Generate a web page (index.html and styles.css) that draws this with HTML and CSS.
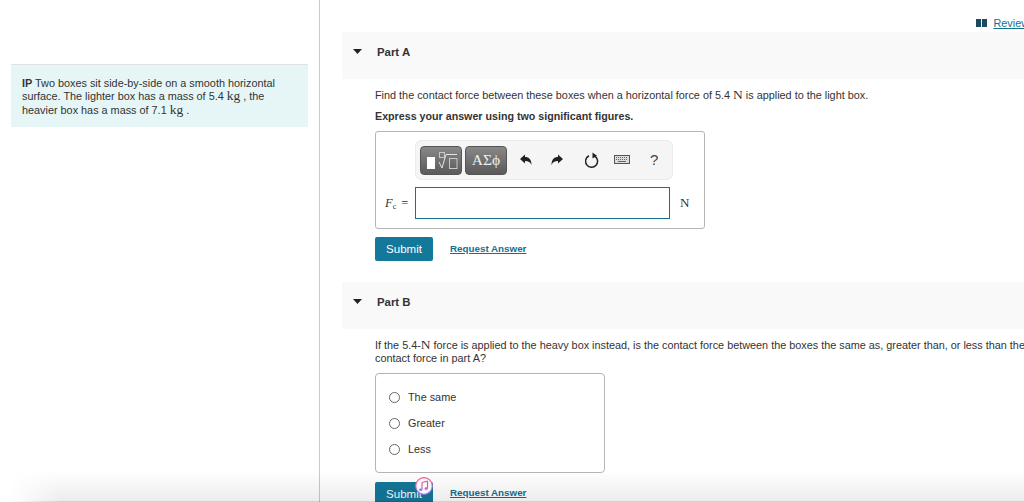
FILE: index.html
```html
<!DOCTYPE html>
<html lang="en">
<head>
<meta charset="utf-8">
<title>Contact force between boxes</title>
<link rel="stylesheet" href="styles.css">
</head>
<body>
<div class="page">
  <aside class="side">
    <div class="intro"><p><b>IP</b> Two boxes sit side-by-side on a smooth horizontal surface. The lighter box has a mass of 5.4 <span class="math">kg</span> , the heavier box has a mass of 7.1 <span class="math">kg</span> .</p></div>
  </aside>
  <main class="main">
    <div class="review"><svg class="book" viewBox="0 0 11 8" width="11" height="8"><path d="M0 0h5v8H0zM6 0h5v8H6z" fill="#1c4a5e"/></svg><a class="review-link">Review</a></div>

    <section class="part-head"><svg class="caret" viewBox="0 0 9 5" width="9" height="5"><path d="M0 0h9L4.500 5z" fill="#222"/></svg><h2>Part A</h2></section>
    <div class="part-a">
      <p class="q">Find the contact force between these boxes when a horizontal force of 5.4 <span class="math">N</span> is applied to the light box.</p>
      <p class="hint">Express your answer using two significant figures.</p>
      <div class="answer">
        <div class="toolbar">
          <span class="tbtn tbtn-tpl"><svg viewBox="0 0 40 27" width="40" height="27"><rect x="6" y="10" width="8" height="12" fill="#fff"/><rect x="18.500" y="5.500" width="5" height="5" fill="none" stroke="#c8c8c8"/><path d="M18 15l3 6 4-13.500h11" fill="none" stroke="#e4e4e4"/><rect x="28.500" y="11.500" width="7.500" height="10" fill="none" stroke="#c8c8c8"/></svg></span>
          <span class="tbtn tbtn-sym">ΑΣϕ</span>
          <span class="tools">
            <svg viewBox="0 0 12 12" width="12" height="12"><path d="M0 5l5-4.500V3c4 0 6.500 2.500 6.500 8C10.500 8.500 8.500 7 5 7v2.500z" fill="#222"/></svg>
            <svg viewBox="0 0 12 12" width="12" height="12"><path d="M12 5L7 .5V3C3 3 .5 5.500.5 11 1.500 8.500 3.500 7 7 7v2.500z" fill="#222"/></svg>
            <svg viewBox="0 0 15 16" width="15" height="16"><path d="M9.500 4A6 6 0 1 1 4 3.800" fill="none" stroke="#222" stroke-width="1.500"/><path d="M7.500 .5l4.500 3.300-4.500 2.700z" fill="#222"/></svg>
            <svg viewBox="0 0 16 9" width="16" height="9"><rect x=".5" y=".5" width="15" height="8" fill="#ddd" stroke="#555"/><path d="M2 2.500h12M2 4.500h12" stroke="#666" stroke-dasharray="1 1"/><path d="M4 6.500h8" stroke="#666"/></svg>
            <span class="help">?</span>
          </span>
        </div>
        <div class="answer-row">
          <span class="label"><i>F</i><sub>c</sub> =</span>
          <span class="field"></span>
          <span class="unit">N</span>
        </div>
      </div>
      <div class="actions"><span class="btn">Submit</span><a class="req">Request Answer</a></div>
    </div>

    <section class="part-head"><svg class="caret" viewBox="0 0 9 5" width="9" height="5"><path d="M0 0h9L4.500 5z" fill="#222"/></svg><h2>Part B</h2></section>
    <div class="part-b">
      <p class="q q-wide">If the 5.4-<span class="math">N</span> force is applied to the heavy box instead, is the contact force between the boxes the same as, greater than, or less than the contact force in part A?</p>
      <div class="choices">
        <label class="choice"><span class="radio"></span>The same</label>
        <label class="choice"><span class="radio"></span>Greater</label>
        <label class="choice"><span class="radio"></span>Less</label>
      </div>
      <div class="actions actions-b"><span class="btn">Submit</span><a class="req">Request Answer</a></div>
    </div>
  </main>
</div>
<div class="dock-shadow"></div>
<svg class="music" viewBox="0 0 18 18" width="18" height="18">
  <defs><linearGradient id="mg" x1="0" y1="0" x2="0" y2="1"><stop offset="0" stop-color="#f2557e"/><stop offset="1" stop-color="#8f7cf0"/></linearGradient></defs>
  <circle cx="9" cy="9" r="8.300" fill="#fbf8fb" stroke="url(#mg)" stroke-width="1.200"/>
  <path d="M7 5.500l5.500-1.300v7.300M7 5.500v7" fill="none" stroke="url(#mg)" stroke-width="1.200"/>
  <ellipse cx="5.700" cy="12.700" rx="1.600" ry="1.300" fill="#a070e8"/><ellipse cx="11.200" cy="11.600" rx="1.600" ry="1.300" fill="#c765c0"/>
</svg>
</body>
</html>
```

FILE: styles.css
```css
* { box-sizing: border-box; }
html, body { margin: 0; height: 502px; overflow: hidden; background: #fff; }
body { font-family: "Liberation Sans", Arial, sans-serif; font-size: 10.850px; color: #333; position: relative; }
p { margin: 0; }
.page { display: flex; width: 1024px; height: 502px; }
.side { width: 320px; flex: none; border-right: 1px solid #c3cadb; padding: 64px 11px 0; }
.intro { width: 297px; height: 63px; background: #e6f6f7; border-top: 1px solid #dfe3e3; padding: 11.500px 11px 0; line-height: 13.500px; }
.math { font-family: "Liberation Serif", serif; font-size: 13.500px; line-height: 0; }
.main { flex: 1; min-width: 0; padding-left: 22px; overflow: hidden; }
.review { height: 32px; padding-top: 17px; display: flex; justify-content: flex-end; align-items: flex-start; white-space: nowrap; margin-right: -5px; gap: 6px; }
.book { margin-top: 2px; flex: none; }
.review-link { color: #14718f; text-decoration: underline; line-height: 12px; }
.part-head { height: 47px; background: #f9f9f9; padding: 14px 0 0 11px; display: flex; align-items: flex-start; width: 700px; }
.caret { margin-top: 3px; flex: none; }
.part-head h2 { margin: 0 0 0 15px; font-size: 11.400px; font-weight: bold; line-height: 13px; color: #333; }
.part-a { height: 203px; padding: 9px 0 0 33px; }
.q { line-height: 15px; }
.hint { font-weight: bold; font-size: 10.700px; margin-top: 6px; line-height: 15px; }
.answer { width: 330px; height: 98px; margin-top: 7px; border: 1px solid #b5b5b5; border-radius: 3px; padding: 8px 0 0 39px; }
.toolbar { width: 258px; height: 40px; background: #f5f5f5; border-radius: 6px; border: 1px solid #ececec; display: flex; align-items: center; padding-left: 4px; gap: 3px; }
.tbtn { width: 42px; height: 29px; border-radius: 4px; background: linear-gradient(#888, #5a5a5a); border: 1px solid #555; display: flex; align-items: center; justify-content: center; flex: none; color: #eee; }
.tbtn svg { display: block; }
.tbtn-sym { font-family: "Liberation Serif", serif; font-size: 15.500px; }
.tools { display: flex; align-items: center; margin: -1px 0 0 10px; }
.tools svg { flex: none; margin-right: 19px; }
.tools svg:nth-child(2) { margin-right: 22px; }
.tools svg:nth-child(3) { margin-right: 14px; }
.tools svg:nth-child(4) { margin-right: 20px; }
.help { font-size: 15px; color: #444; }
.answer-row { display: flex; align-items: center; margin-top: 7px; margin-left: -30px; }
.label { font-family: "Liberation Serif", serif; font-size: 12.500px; width: 30px; flex: none; color: #333; white-space: nowrap; }
.label sub { font-size: 8px; line-height: 0; vertical-align: -2px; margin-right: 2px; }
.field { width: 255px; height: 32px; border: 1px solid #14718f; background: #fff; flex: none; }
.unit { font-family: "Liberation Serif", serif; font-size: 13px; margin-left: 10px; color: #333; }
.actions { display: flex; align-items: center; margin-top: 8px; }
.btn { width: 58px; height: 24px; background: #14789b; color: #fff; border-radius: 2px; font-size: 11.500px; display: flex; align-items: center; justify-content: center; flex: none; }
.req { color: #14718f; font-weight: bold; font-size: 9.800px; text-decoration: underline; margin-left: 17px; margin-bottom: 2px; }
.part-b { padding: 10px 0 0 33px; }
.q-wide { width: 660px; line-height: 13px; }
.choices { width: 230px; height: 100px; margin-top: 8px; border: 1px solid #b5b5b5; border-radius: 4px; padding: 10px 0 0 13px; }
.choice { display: flex; align-items: center; height: 26px; gap: 8px; }
.radio { width: 11px; height: 11px; border: 1px solid #666; border-radius: 50%; background: #fff; flex: none; }
.actions-b { margin-top: 9px; }
.actions-b .req { margin-bottom: 4px; }
.dock-shadow { position: absolute; left: 0; right: 0; bottom: 0; height: 32px; background: linear-gradient(rgba(0,0,0,0), rgba(0,0,0,.07) 95%, rgba(0,0,0,.22)); -webkit-mask-image: linear-gradient(90deg, transparent 10px, #000 60px); mask-image: linear-gradient(90deg, transparent 10px, #000 60px); pointer-events: none; }
.music { position: absolute; left: 415px; top: 477px; }
```
